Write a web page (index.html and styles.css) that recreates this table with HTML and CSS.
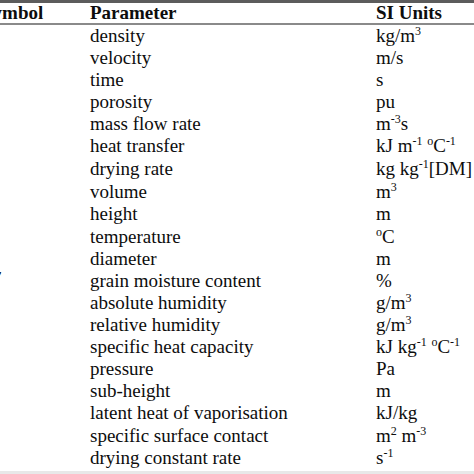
FILE: index.html
```html
<!DOCTYPE html>
<html>
<head>
<meta charset="utf-8">
<link rel="stylesheet" href="styles.css">
</head>
<body>
<div class="page">
  <div class="table">
    <div class="row head">
      <div class="sym">Symbol</div>
      <div class="par">Parameter</div>
      <div class="unit">SI Units</div>
    </div>
    <div class="row"><div class="sym"></div><div class="par">density</div><div class="unit">kg/m<sup>3</sup></div></div>
    <div class="row"><div class="sym"></div><div class="par">velocity</div><div class="unit">m/s</div></div>
    <div class="row"><div class="sym"></div><div class="par">time</div><div class="unit">s</div></div>
    <div class="row"><div class="sym"></div><div class="par">porosity</div><div class="unit">pu</div></div>
    <div class="row"><div class="sym"></div><div class="par">mass flow rate</div><div class="unit">m<sup>-3</sup>s</div></div>
    <div class="row tall"><div class="sym"></div><div class="par">heat transfer</div><div class="unit">kJ m<sup>-1</sup> <sup>o</sup>C<sup>-1</sup></div></div>
    <div class="row tall"><div class="sym"></div><div class="par">drying rate</div><div class="unit">kg kg<sup>-1</sup>[DM]</div></div>
    <div class="row"><div class="sym"></div><div class="par">volume</div><div class="unit">m<sup>3</sup></div></div>
    <div class="row tall"><div class="sym"></div><div class="par">height</div><div class="unit">m</div></div>
    <div class="row"><div class="sym"></div><div class="par">temperature</div><div class="unit"><sup>o</sup>C</div></div>
    <div class="row"><div class="sym"></div><div class="par">diameter</div><div class="unit">m</div></div>
    <div class="row"><div class="sym"><span class="frag">γ</span></div><div class="par">grain moisture content</div><div class="unit">%</div></div>
    <div class="row"><div class="sym"></div><div class="par">absolute humidity</div><div class="unit">g/m<sup>3</sup></div></div>
    <div class="row"><div class="sym"></div><div class="par">relative humidity</div><div class="unit">g/m<sup>3</sup></div></div>
    <div class="row"><div class="sym"></div><div class="par">specific heat capacity</div><div class="unit">kJ kg<sup>-1</sup> <sup>o</sup>C<sup>-1</sup></div></div>
    <div class="row"><div class="sym"></div><div class="par">pressure</div><div class="unit">Pa</div></div>
    <div class="row"><div class="sym"></div><div class="par">sub-height</div><div class="unit">m</div></div>
    <div class="row tall"><div class="sym"></div><div class="par">latent heat of vaporisation</div><div class="unit">kJ/kg</div></div>
    <div class="row"><div class="sym"></div><div class="par">specific surface contact</div><div class="unit">m<sup>2</sup> m<sup>-3</sup></div></div>
    <div class="row"><div class="sym"></div><div class="par">drying constant rate</div><div class="unit">s<sup>-1</sup></div></div>
  </div>
  <div class="bottom"></div>
</div>
</body>
</html>
```
FILE: styles.css
```css
html, body {
  margin: 0;
  padding: 0;
  background: #ffffff;
}
body {
  width: 474px;
  height: 474px;
  overflow: hidden;
  font-family: "Liberation Serif", "Times New Roman", serif;
  font-size: 19px;
  color: #0d0d0d;
}
.page {
  width: 474px;
  height: 474px;
  display: flex;
  flex-direction: column;
}
.table {
  margin-left: -18px;
  border-top: 3px solid #5c5c5c;
  flex: 1;
}
.row {
  display: grid;
  grid-template-columns: 108px 286px 1fr;
  height: 22px;
  line-height: 22px;
  white-space: nowrap;
}
.row.tall {
  height: 23px;
}
.row.head {
  height: 20px;
  line-height: 20px;
  font-weight: bold;
  border-bottom: 2px solid #8a8a8a;
}
.sym {
  overflow: visible;
}
.frag {
  display: inline-block;
  margin-left: 11px;
  line-height: 0;
  vertical-align: 6px;
  font-style: italic;
}
sup {
  font-size: 12px;
  line-height: 0;
  vertical-align: 7px;
}
.bottom {
  height: 3px;
  background: #e8e8e8;
}
```
